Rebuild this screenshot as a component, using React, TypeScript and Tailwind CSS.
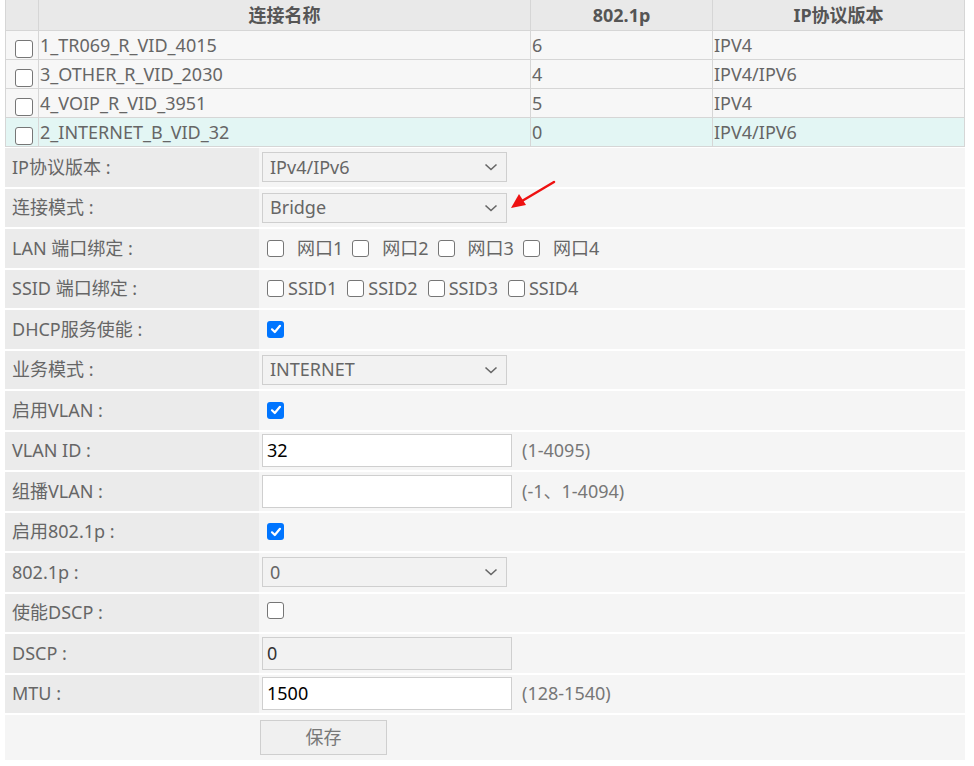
import React from "react";

const FONT = { fontFamily: '"Noto Sans", "Noto Sans CJK SC", sans-serif' };

function Box({ checked, big }: { checked?: boolean; big?: boolean }) {
  const size = big ? "h-[18px] w-[18px]" : "h-[17px] w-[17px]";
  if (checked)
    return (
      <span className={`inline-flex ${size} shrink-0 items-center justify-center rounded-[3px] bg-[#0075ff]`}>
        <svg width="12" height="12" viewBox="0 0 12 12">
          <path d="M2 6.3 L4.8 9 L10 2.8" fill="none" stroke="#fff" strokeWidth="2.2" strokeLinecap="round" strokeLinejoin="round" />
        </svg>
      </span>
    );
  return <span className={`inline-block ${size} shrink-0 rounded-[3px] border border-[#767676] bg-white`} />;
}

function Chevron() {
  return (
    <svg width="14" height="10" viewBox="0 0 14 10" className="absolute right-[8px] top-1/2 -translate-y-1/2">
      <path d="M1.5 2.5 L7 7.5 L12.5 2.5" fill="none" stroke="#666" strokeWidth="1.6" />
    </svg>
  );
}

function Select({ value }: { value: string }) {
  return (
    <div className="relative flex h-[30px] w-[245px] items-center border border-[#cfcfcf] bg-[#f2f2f2] pl-[7px] text-[18px] text-[#666]">
      {value}
      <Chevron />
    </div>
  );
}

function Input({ value, disabled }: { value: string; disabled?: boolean }) {
  return (
    <div
      className={`flex h-[33px] w-[250px] items-center border border-[#cfcfcf] pl-[4px] text-[18px] ${
        disabled ? "bg-[#f2f2f2] text-[#333]" : "bg-white text-black"
      }`}
    >
      {value}
    </div>
  );
}

function Hint({ children }: { children: React.ReactNode }) {
  return <span className="ml-[10px] text-[18px] text-[#777]">{children}</span>;
}

function Row({ label, children }: { label: string; children?: React.ReactNode }) {
  return (
    <div className="flex h-[38.5px]">
      <div className="flex w-[254px] shrink-0 items-center bg-[#ebebeb] pl-[7px] text-[18px] text-[#666]">{label}</div>
      <div className="flex flex-1 items-center bg-[#f5f5f5] pl-[3px]">{children}</div>
    </div>
  );
}

const rows = [
  { name: "1_TR069_R_VID_4015", p: "6", ip: "IPV4" },
  { name: "3_OTHER_R_VID_2030", p: "4", ip: "IPV4/IPV6" },
  { name: "4_VOIP_R_VID_3951", p: "5", ip: "IPV4" },
  { name: "2_INTERNET_B_VID_32", p: "0", ip: "IPV4/IPV6", sel: true },
];

export default function App() {
  return (
    <div className="relative h-[766px] w-[974px] overflow-hidden bg-white" style={FONT}>
      <div className="ml-[5px] w-[960px]">
        {/* table */}
        <div className="border-x border-[#d6d6d6]">
          <div className="grid h-[31px] grid-cols-[32px_492px_182px_252px] border-b border-[#d6d6d6] bg-[#e9e9e9] text-[18px] font-bold text-[#555]">
            <div />
            <div className="flex items-center justify-center border-l border-[#d6d6d6]">连接名称</div>
            <div className="flex items-center justify-center border-l border-[#d6d6d6]">802.1p</div>
            <div className="flex items-center justify-center border-l border-[#d6d6d6]">IP协议版本</div>
          </div>
          {rows.map((r) => (
            <div
              key={r.name}
              className={`grid h-[29px] grid-cols-[32px_492px_182px_252px] border-b border-[#d6d6d6] text-[18px] text-[#666] ${
                r.sel ? "bg-[#e3f6f4]" : "bg-[#f7f7f7]"
              }`}
            >
              <div className="flex items-end justify-center pb-[1px] pl-[3px]">
                <Box big />
              </div>
              <div className="flex items-center border-l border-[#d6d6d6] pl-[1px]">{r.name}</div>
              <div className="flex items-center border-l border-[#d6d6d6] pl-[1px]">{r.p}</div>
              <div className="flex items-center border-l border-[#d6d6d6] pl-[1px]">{r.ip}</div>
            </div>
          ))}
        </div>

        {/* form */}
        <div className="flex flex-col gap-[2px] pt-[1px]">
          <Row label="IP协议版本 :">
            <Select value="IPv4/IPv6" />
          </Row>
          <Row label="连接模式 :">
            <Select value="Bridge" />
          </Row>
          <Row label="LAN 端口绑定 :">
            <div className="flex items-center pl-[5px] text-[18px] text-[#666]">
              {["网口1", "网口2", "网口3", "网口4"].map((t) => (
                <span key={t} className="mr-[9px] flex items-center">
                  <Box />
                  <span className="ml-[13px]">{t}</span>
                </span>
              ))}
            </div>
          </Row>
          <Row label="SSID 端口绑定 :">
            <div className="flex items-center pl-[5px] text-[18px] text-[#666]">
              {["SSID1", "SSID2", "SSID3", "SSID4"].map((t) => (
                <span key={t} className="mr-[10px] flex items-center">
                  <Box />
                  <span className="ml-[4px]">{t}</span>
                </span>
              ))}
            </div>
          </Row>
          <Row label="DHCP服务使能 :">
            <span className="pl-[5px]">
              <Box checked />
            </span>
          </Row>
          <Row label="业务模式 :">
            <Select value="INTERNET" />
          </Row>
          <Row label="启用VLAN :">
            <span className="pl-[5px]">
              <Box checked />
            </span>
          </Row>
          <Row label="VLAN ID :">
            <Input value="32" />
            <Hint>(1-4095)</Hint>
          </Row>
          <Row label="组播VLAN :">
            <Input value="" />
            <Hint>(-1、1-4094)</Hint>
          </Row>
          <Row label="启用802.1p :">
            <span className="pl-[5px]">
              <Box checked />
            </span>
          </Row>
          <Row label="802.1p :">
            <Select value="0" />
          </Row>
          <Row label="使能DSCP :">
            <span className="pl-[5px]">
              <Box />
            </span>
          </Row>
          <Row label="DSCP :">
            <Input value="0" disabled />
          </Row>
          <Row label="MTU :">
            <Input value="1500" />
            <Hint>(128-1540)</Hint>
          </Row>
          <div className="flex h-[45px] items-center bg-[#f5f5f5] pl-[255px]">
            <div className="flex h-[35px] w-[127px] items-center justify-center border border-[#cfcfcf] bg-[#f0f0f0] text-[18px] text-[#777]">
              保存
            </div>
          </div>
        </div>
      </div>

      {/* red annotation arrow */}
      <svg className="absolute left-[505px] top-[178px]" width="54" height="36" viewBox="0 0 54 36">
        <line x1="49" y1="4" x2="17" y2="23" stroke="#ee1111" strokeWidth="2.5" strokeLinecap="round" />
        <polygon points="6,30 14,16 21,27" fill="#ee1111" />
      </svg>
    </div>
  );
}
